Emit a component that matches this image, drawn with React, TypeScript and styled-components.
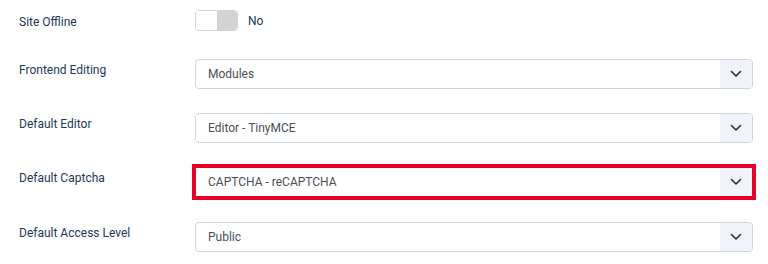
import { createGlobalStyle } from "styled-components";
import styled from "styled-components";

const GlobalStyle = createGlobalStyle`
    body {
        margin: 0;
        background: #fff;
        font-family: Roboto, "Liberation Sans", Arial, sans-serif;
    }
`;

const fields = [
    { label: "Frontend Editing", value: "Modules" },
    { label: "Default Editor", value: "Editor - TinyMCE" },
    { label: "Default Captcha", value: "CAPTCHA - reCAPTCHA", highlight: true },
    { label: "Default Access Level", value: "Public" },
];

function App() {
    return (
        <>
            <GlobalStyle />
            <Form>
                <Row>
                    <Label $center>Site Offline</Label>
                    <SwitchHolder>
                        <Switch>
                            <span className="on" />
                            <span className="off" />
                        </Switch>
                        <SwitchText>No</SwitchText>
                    </SwitchHolder>
                </Row>
                {fields.map((field, index) => (
                    <Row key={index}>
                        <Label>{field.label}</Label>
                        <Select $highlight={field.highlight}>
                            <span className="value">{field.value}</span>
                            <Caret>
                                <svg width="12" height="8" viewBox="0 0 12 8">
                                    <polyline
                                        points="1.5,1.5 6,6 10.5,1.5"
                                        fill="none"
                                        stroke="#2a2e33"
                                        strokeWidth="1.6"
                                        strokeLinecap="round"
                                        strokeLinejoin="round"
                                    />
                                </svg>
                            </Caret>
                        </Select>
                    </Row>
                ))}
            </Form>
        </>
    );
}

const Form = styled.div`
    width: 768px;
    height: 264px;
    box-sizing: border-box;
    padding: 5px 15px 0 19px;
    display: flex;
    flex-direction: column;
    gap: 24px;
`;

const Row = styled.div`
    display: flex;
    height: 30px;
    align-items: stretch;
    &:last-child {
        margin-top: 1px;
    }
`;

const Label = styled.div<{ $center?: boolean }>`
    width: 176px;
    flex-shrink: 0;
    font-size: 12px;
    line-height: 18px;
    color: #22385a;
    align-self: ${(p) => (p.$center ? "center" : "flex-start")};
    padding-top: ${(p) => (p.$center ? "3px" : "2px")};
`;

const SwitchHolder = styled.div`
    display: flex;
    align-items: center;
    gap: 10px;
`;

const Switch = styled.div`
    width: 43px;
    height: 21px;
    box-sizing: border-box;
    border: 1px solid #ccd6e3;
    border-radius: 4px;
    display: flex;
    overflow: hidden;
    .on {
        flex: 1;
        background: #fff;
    }
    .off {
        flex: 1;
        background: #d3d3d3;
    }
`;

const SwitchText = styled.span`
    font-size: 12px;
    color: #22385a;
    padding-top: 1px;
`;

const Select = styled.div<{ $highlight?: boolean }>`
    width: 558px;
    box-sizing: border-box;
    display: flex;
    align-items: stretch;
    border: 1px solid ${(p) => (p.$highlight ? "#e8002b" : "#cdd5e1")};
    border-radius: ${(p) => (p.$highlight ? "0" : "4px")};
    box-shadow: ${(p) => (p.$highlight ? "0 0 0 3px #e8002b" : "none")};
    overflow: hidden;
    .value {
        flex: 1;
        display: flex;
        align-items: center;
        padding-left: 12px;
        font-size: 12px;
        color: #4a4f57;
    }
`;

const Caret = styled.div`
    width: 32px;
    background: #f0f3f9;
    display: flex;
    align-items: center;
    justify-content: center;
`;

export default App;
